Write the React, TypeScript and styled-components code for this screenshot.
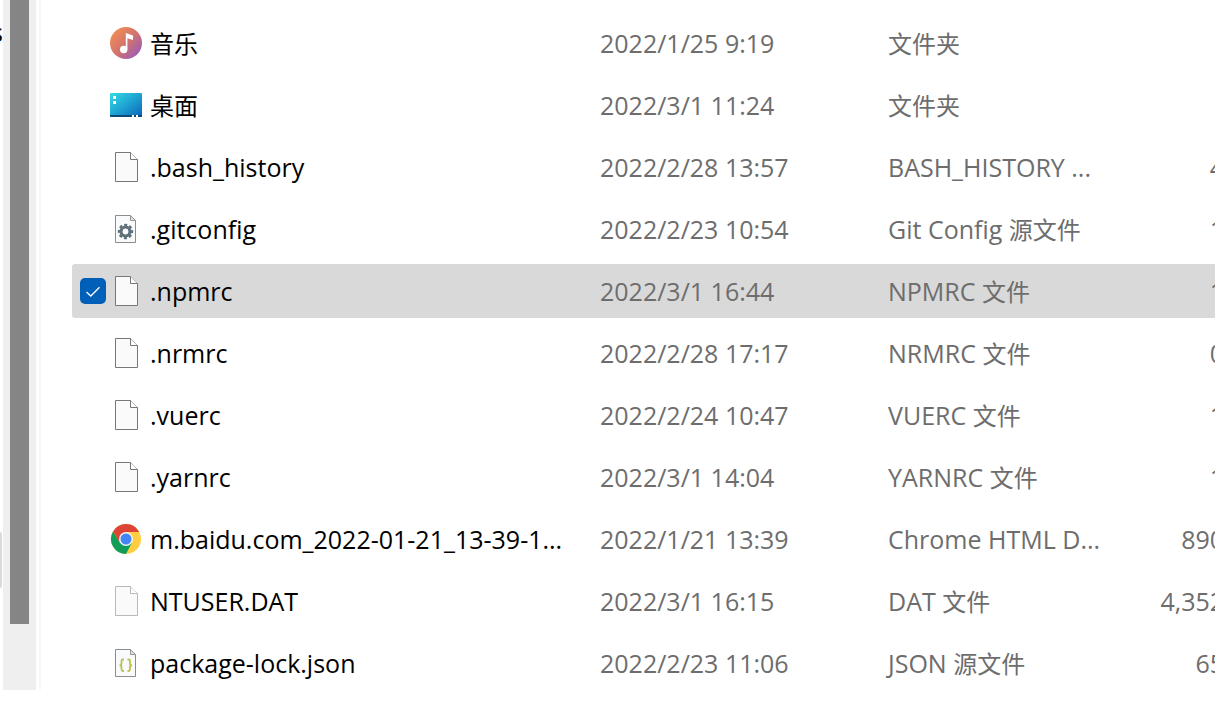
import React from "react";
import styled, { createGlobalStyle } from "styled-components";

const GlobalStyle = createGlobalStyle`
  * { box-sizing: border-box; }
  html, body, #root { height: 100%; }
  body {
    margin: 0;
    overflow: hidden;
    background: #fff;
    color: #000;
    font-family: "Open Sans", "Noto Sans CJK SC", sans-serif;
    font-size: 25px;
    line-height: 32px;
    font-kerning: none;
  }
`;

const Window = styled.div`
  display: flex;
  height: 100%;
  padding-bottom: 11px;
  overflow: hidden;
`;

const NavEdge = styled.nav`
  display: flex;
  flex-direction: column;
  justify-content: space-between;
  flex: 0 0 3px;
  padding: 16px 0 102px;
  overflow: hidden;
`;

const NavLabel = styled.span`
  align-self: flex-end;
`;

const NavSelection = styled.span`
  width: 2px;
  height: 56px;
  background: #dadada;
  border-radius: 0 2px 2px 0;
`;

const ScrollTrack = styled.div`
  flex: 0 0 33px;
  padding: 0 7px 66px;
  background: #efefef;
`;

const ScrollThumb = styled.div`
  height: 100%;
  background: #858585;
`;

const ListPane = styled.main`
  flex: 1;
  min-width: 0;
  margin-left: 3px;
  padding: 8px 0 0 31px;
  border-left: 2px solid #f7f7f7;
`;

const FileTable = styled.table`
  width: 100%;
  min-width: 1190px;
  table-layout: fixed;
  border-collapse: separate;
  border-spacing: 0 8px;
`;

const Column = styled.col<{ $width?: number }>`
  width: ${(p) => (p.$width ? `${p.$width}px` : "auto")};
`;

const Row = styled.tr<{ $selected: boolean }>`
  height: 54px;
  background: ${(p) => (p.$selected ? "#d9d9d9" : "transparent")};
`;

const Cell = styled.td<{ $align?: "right" }>`
  padding: 0;
  color: #6d6d6d;
  text-align: ${(p) => p.$align ?? "left"};
  vertical-align: middle;
  white-space: nowrap;
`;

const NameCell = styled(Cell)`
  padding-left: 8px;
  color: #000;
  border-radius: 3px 0 0 3px;
`;

const NameLabel = styled.label`
  display: flex;
  align-items: center;
`;

const Tick = styled.span<{ $visible: boolean }>`
  display: grid;
  width: 26px;
  height: 26px;
  margin-right: 4px;
  visibility: ${(p) => (p.$visible ? "visible" : "hidden")};
  & > * { grid-area: 1 / 1; }
  & > svg { pointer-events: none; }
`;

const Checkbox = styled.input`
  appearance: none;
  width: 26px;
  height: 26px;
  margin: 0;
  border-radius: 5px;
  background: #fff;
  &:checked { background: #005fb8; }
`;

const IconBox = styled.span`
  display: flex;
  width: 32px;
  height: 32px;
  margin-right: 8px;
`;

const Han = styled.span`
  font-family: "Noto Sans CJK SC", sans-serif;
  font-size: 24px;
`;

const Text = ({ children }: { children: string }) => (
  <span>
    {children.split(/([\u4e00-\u9fff]+)/).map((run, i) =>
      i % 2 ? <Han key={i}>{run}</Han> : run
    )}
  </span>
);

type Kind = "music" | "desktop" | "file" | "faded" | "config" | "chrome" | "json";

const Page = ({ stroke }: { stroke: string }) => (
  <g>
    <path d="M5.5 1.5H20.5L27.5 8.5V30.5H5.5Z" fill="#fafafa" stroke={stroke} />
    <path d="M20.5 1.5V8.5H27.5" fill="#fff" stroke={stroke} />
  </g>
);

const SmallPage = () => (
  <g>
    <path d="M5.5 2.5H20.5L25.5 7.5V29.5H5.5Z" fill="#f8fafc" stroke="#8c8c8c" />
    <path d="M20.5 2.5V7.5H25.5Z" fill="#dedede" stroke="#9a9a9a" />
  </g>
);

const FileIcon = ({ kind }: { kind: Kind }) => (
  <svg width="32" height="32" viewBox="0 0 32 32" aria-hidden="true">
    {kind === "music" && (
      <g>
        <defs>
          <linearGradient id="music" x1="0.1" y1="0.2" x2="0.85" y2="0.9">
            <stop offset="0" stopColor="#ef8a56" />
            <stop offset="0.5" stopColor="#d2736f" />
            <stop offset="1" stopColor="#9d5db4" />
          </linearGradient>
        </defs>
        <circle cx="16" cy="16" r="16" fill="url(#music)" />
        <circle cx="13.7" cy="22.5" r="3.7" fill="#fff" />
        <path d="M15.8 22.5V6L23 8.5V13L17.4 11.3V22.5Z" fill="#fff" />
      </g>
    )}
    {kind === "desktop" && (
      <g>
        <defs>
          <linearGradient id="desk" x1="0" y1="0" x2="1" y2="1">
            <stop offset="0" stopColor="#36dbe4" />
            <stop offset="0.5" stopColor="#1ea3d2" />
            <stop offset="1" stopColor="#0864b8" />
          </linearGradient>
        </defs>
        <rect y="4" width="32" height="24" rx="1" fill="url(#desk)" />
        <path d="M0 26H32V27Q32 28 31 28H1Q0 28 0 27Z" fill="#0a4a73" />
        <path d="M3 7h3v3H3zM3 12h3v3H3zM22 26h2v2h-2zM26 26h2v2h-2z" fill="#fff" />
      </g>
    )}
    {kind === "file" && <Page stroke="#777" />}
    {kind === "faded" && <Page stroke="#b9b9b9" />}
    {kind === "config" && (
      <g>
        <SmallPage />
        <g stroke="#5f7078" fill="none">
          <circle cx="15.5" cy="18.5" r="4.5" strokeWidth="3.2" />
          <circle cx="15.5" cy="18.5" r="6.6" strokeWidth="2.2" strokeDasharray="3 2.184" strokeDashoffset="1.5" />
        </g>
      </g>
    )}
    {kind === "json" && (
      <g>
        <SmallPage />
        <path
          d="M14 12.500H13Q11.500 12.500 11.500 14V16.500Q11.500 18.300 9.500 18.300Q11.500 18.300 11.500 20V22.500Q11.500 24 13 24H14M17.500 12.500H18.500Q20 12.500 20 14V16.500Q20 18.300 22 18.300Q20 18.300 20 20V22.500Q20 24 18.500 24H17.500"
          fill="none"
          stroke="#bcc04c"
          strokeWidth="1.800"
        />
      </g>
    )}
    {kind === "chrome" && (
      <g>
        <circle cx="16" cy="16" r="15" fill="#ffcd40" />
        <path d="M3 8.5A15 15 0 0 0 16 31L22.1 19.5L9.9 19.5Z" fill="#0f9d58" />
        <path d="M3 8.5A15 15 0 0 1 29.2 8.9H16L9.9 19.5Z" fill="#db4437" />
        <circle cx="16" cy="16" r="7" fill="#f1f1f1" />
        <circle cx="16" cy="16" r="5.5" fill="#4285f4" />
      </g>
    )}
  </svg>
);

interface FileEntry {
  icon: Kind;
  name: string;
  date: string;
  type: string;
  size: string;
}

const files: FileEntry[] = [
  { icon: "music", name: "音乐", date: "2022/1/25 9:19", type: "文件夹", size: "" },
  { icon: "desktop", name: "桌面", date: "2022/3/1 11:24", type: "文件夹", size: "" },
  { icon: "file", name: ".bash_history", date: "2022/2/28 13:57", type: "BASH_HISTORY ...", size: "4 KB" },
  { icon: "config", name: ".gitconfig", date: "2022/2/23 10:54", type: "Git Config 源文件", size: "1 KB" },
  { icon: "file", name: ".npmrc", date: "2022/3/1 16:44", type: "NPMRC 文件", size: "1 KB" },
  { icon: "file", name: ".nrmrc", date: "2022/2/28 17:17", type: "NRMRC 文件", size: "0 KB" },
  { icon: "file", name: ".vuerc", date: "2022/2/24 10:47", type: "VUERC 文件", size: "1 KB" },
  { icon: "file", name: ".yarnrc", date: "2022/3/1 14:04", type: "YARNRC 文件", size: "1 KB" },
  { icon: "chrome", name: "m.baidu.com_2022-01-21_13-39-1...", date: "2022/1/21 13:39", type: "Chrome HTML D...", size: "890 KB" },
  { icon: "faded", name: "NTUSER.DAT", date: "2022/3/1 16:15", type: "DAT 文件", size: "4,352 KB" },
  { icon: "json", name: "package-lock.json", date: "2022/2/23 11:06", type: "JSON 源文件", size: "65 KB" },
];

export default function App() {
  const [selected, setSelected] = React.useState(".npmrc");
  return (
    <Window>
      <GlobalStyle />
      <NavEdge>
        <NavLabel>s</NavLabel>
        <NavSelection />
      </NavEdge>
      <ScrollTrack>
        <ScrollThumb />
      </ScrollTrack>
      <ListPane>
        <FileTable>
          <colgroup>
            <Column $width={528} />
            <Column $width={288} />
            <Column />
            <Column $width={144} />
          </colgroup>
          <tbody>
            {files.map((file) => {
              const isSelected = file.name === selected;
              return (
                <Row key={file.name} $selected={isSelected}>
                  <NameCell>
                    <NameLabel>
                      <Tick $visible={isSelected}>
                        <Checkbox
                          type="checkbox"
                          checked={isSelected}
                          onChange={() => setSelected(isSelected ? "" : file.name)}
                        />
                        <svg width="26" height="26" viewBox="0 0 26 26" aria-hidden="true">
                          <path d="M6.5 14L10.8 18L19.5 9.3" fill="none" stroke="#fff" strokeWidth="1.3" />
                        </svg>
                      </Tick>
                      <IconBox>
                        <FileIcon kind={file.icon} />
                      </IconBox>
                      <Text>{file.name}</Text>
                    </NameLabel>
                  </NameCell>
                  <Cell>{file.date}</Cell>
                  <Cell>
                    <Text>{file.type}</Text>
                  </Cell>
                  <Cell $align="right">{file.size}</Cell>
                </Row>
              );
            })}
          </tbody>
        </FileTable>
      </ListPane>
    </Window>
  );
}
